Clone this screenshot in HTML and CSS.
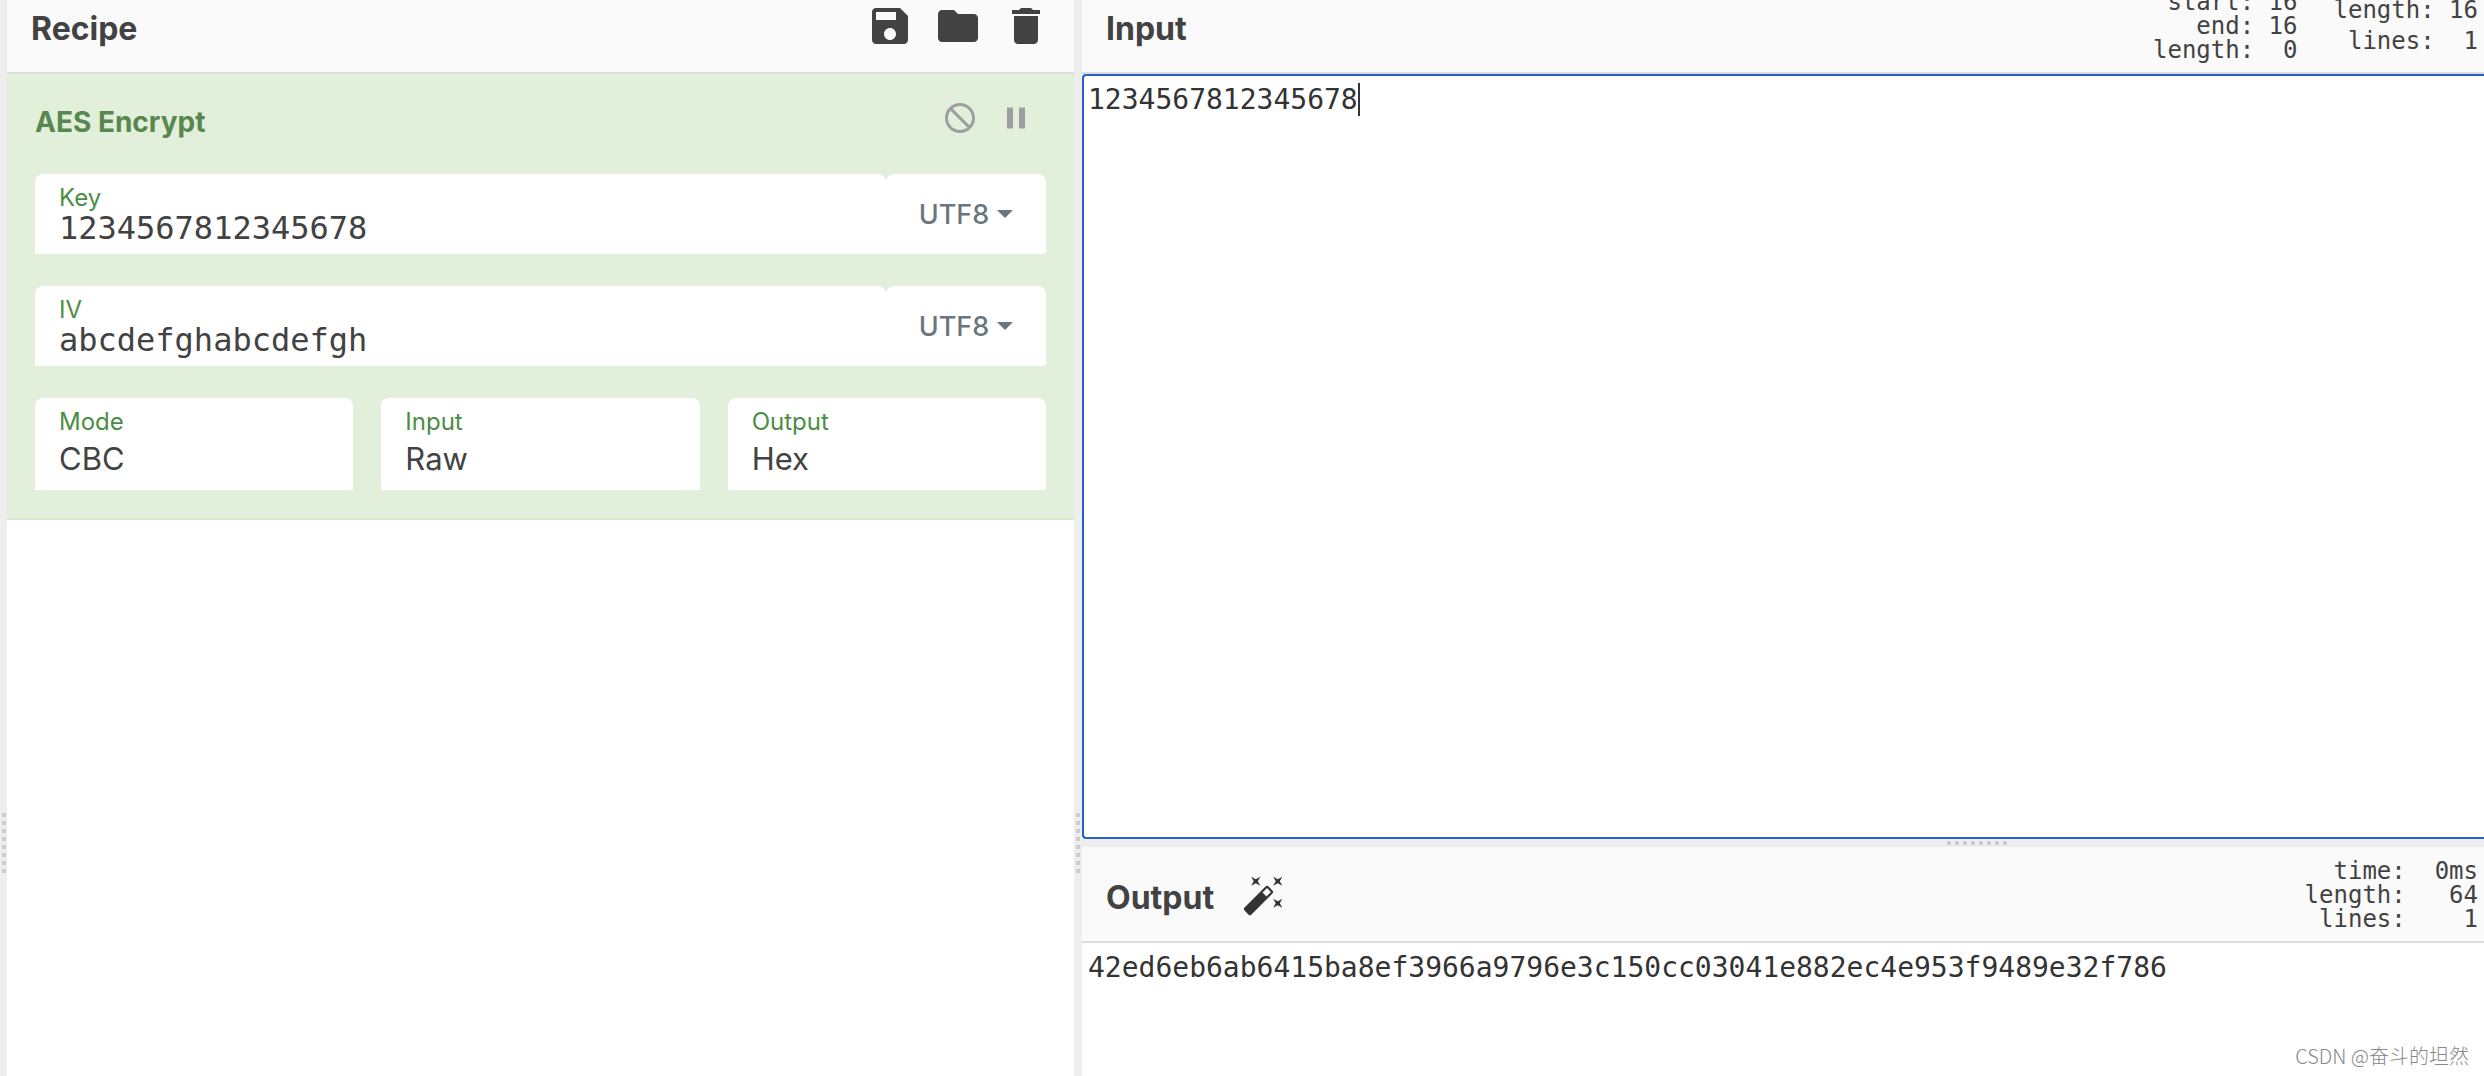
FILE: index.html
```html
<!DOCTYPE html>
<html lang="en">
<head>
<meta charset="utf-8">
<title>Recipe</title>
<link rel="stylesheet" href="styles.css">
</head>
<body>
<div id="workspace">
  <div class="gutter gutter-vertical"><span class="grip"></span></div>

  <!-- recipe -->
  <div id="recipe">
    <div class="title">
      <h2>Recipe</h2>
      <div class="controls">
        <button class="icon-button" aria-label="Save recipe">
          <svg viewBox="0 0 24 24"><path d="M17 3H5c-1.110 0-2 .9-2 2v14c0 1.100.89 2 2 2h14c1.100 0 2-.9 2-2V7l-4-4zm-5 16c-1.660 0-3-1.340-3-3s1.340-3 3-3 3 1.340 3 3-1.340 3-3 3zm3-10H5V5h10v4z"/></svg>
        </button>
        <button class="icon-button" aria-label="Load recipe">
          <svg viewBox="0 0 24 24"><path d="M10 4H4c-1.100 0-1.990.9-1.990 2L2 18c0 1.100.9 2 2 2h16c1.100 0 2-.9 2-2V8c0-1.100-.9-2-2-2h-8l-2-2z"/></svg>
        </button>
        <button class="icon-button" aria-label="Clear recipe">
          <svg viewBox="0 0 24 24"><path d="M6 19c0 1.100.9 2 2 2h8c1.100 0 2-.9 2-2V7H6v12zM19 4h-3.500l-1-1h-5l-1 1H5v2h14V4z"/></svg>
        </button>
      </div>
    </div>

    <div class="operation">
      <div class="op-head">
        <h3>AES Encrypt</h3>
        <div class="op-icons">
          <button class="op-icon" aria-label="Disable operation">
            <svg viewBox="0 0 24 24"><path d="M12 2C6.480 2 2 6.480 2 12s4.480 10 10 10 10-4.480 10-10S17.520 2 12 2zm0 18c-4.420 0-8-3.580-8-8 0-1.850.63-3.550 1.690-4.900L16.900 18.310C15.550 19.370 13.850 20 12 20zm6.310-3.100L7.100 5.690C8.450 4.630 10.150 4 12 4c4.420 0 8 3.580 8 8 0 1.850-.63 3.550-1.690 4.900z"/></svg>
          </button>
          <button class="op-icon" aria-label="Set breakpoint">
            <svg viewBox="0 0 24 24"><path d="M6 19h4V5H6v14zm8-14v14h4V5h-4z"/></svg>
          </button>
        </div>
      </div>
      <div class="arg-group">
        <div class="arg toggle-string">
          <label for="key">Key</label>
          <input id="key" type="text" value="1234567812345678">
        </div>
        <button class="toggle">UTF8<span class="arrow"></span></button>
      </div>
      <div class="arg-group">
        <div class="arg toggle-string">
          <label for="iv">IV</label>
          <input id="iv" type="text" value="abcdefghabcdefgh">
        </div>
        <button class="toggle">UTF8<span class="arrow"></span></button>
      </div>
      <div class="arg-row">
        <div class="arg">
          <label for="mode">Mode</label>
          <select id="mode"><option>CBC</option></select>
        </div>
        <div class="arg">
          <label for="in-format">Input</label>
          <select id="in-format"><option>Raw</option></select>
        </div>
        <div class="arg">
          <label for="out-format">Output</label>
          <select id="out-format"><option>Hex</option></select>
        </div>
      </div>
    </div>
  </div>

  <div class="gutter gutter-vertical"><span class="grip"></span></div>

  <!-- input and output -->
  <div id="io">
    <div class="title">
      <h2><label for="input-text">Input</label></h2>
      <div class="stats">
<pre>start: 16
  end: 16
length:  0</pre>
<pre class="loose">length: 16
 lines:  1</pre>
      </div>
    </div>
    <div class="input-wrap">
      <textarea id="input-text" spellcheck="false">1234567812345678</textarea>
      <span class="cursor"></span>
    </div>
    <div class="gutter gutter-horizontal"><span class="grip"></span></div>
    <div class="title">
      <h2><label for="output-text">Output</label></h2>
      <button class="magic" aria-label="Magic">
        <svg viewBox="0 0 24 24"><path d="M7.500 5.600L5 7l1.400-2.500L5 2l2.500 1.400L10 2 8.600 4.500 10 7 7.500 5.600M19.500 15.400L22 14l-1.400 2.500L22 19l-2.500-1.400L17 19l1.400-2.500L17 14l2.500 1.400M22 2l-1.400 2.500L22 7l-2.500-1.400L17 7l1.400-2.500L17 2l2.500 1.400L22 2M13.340 12.780l2.440-2.440-2.120-2.120-2.440 2.440 2.120 2.120M14.370 7.290l2.340 2.340c.39.37.39 1.020 0 1.410L5.040 22.710c-.39.39-1.040.39-1.410 0l-2.340-2.340c-.39-.37-.39-1.020 0-1.410L12.960 7.290c.39-.39 1.040-.39 1.410 0z"/></svg>
      </button>
      <div class="stats">
<pre>  time:  0ms
length:   64
 lines:    1</pre>
      </div>
    </div>
    <textarea id="output-text" readonly spellcheck="false">42ed6eb6ab6415ba8ef3966a9796e3c150cc03041e882ec4e953f9489e32f786</textarea>
  </div>
</div>
<div id="watermark">CSDN @奋斗的坦然</div>
</body>
</html>
```
FILE: styles.css
```css
* {
box-sizing: border-box;
}
body {
margin: 0;
height: 100vh;
overflow: hidden;
background: white;
color: #424242;
font-family: Inter, "Liberation Sans", sans-serif;
}
button {
border: none;
padding: 0;
background: transparent;
cursor: pointer;
}
svg {
display: block;
width: 100%;
height: 100%;
fill: currentColor;
}
/* the top of the headers is scrolled out of the window */
#workspace {
display: flex;
height: calc(100vh + 22px);
margin-top: -22px;
}
#recipe {
flex: 1067 1 0;
min-width: 0;
}
#io {
flex: 1402 1 0;
min-width: 0;
display: flex;
flex-direction: column;
}

/* split bars */
.gutter {
flex: none;
display: flex;
background: #eeeeee;
}
.gutter-vertical {
width: 8px;
align-items: flex-end;
justify-content: center;
padding-bottom: 203px;
}
.gutter-vertical:first-child {
width: 7px;
}
.gutter-horizontal {
height: 8px;
align-items: center;
justify-content: flex-end;
padding-right: 34%;
}
.grip {
width: 4px;
height: 60px;
background: repeating-linear-gradient(to bottom, #cccccc 0 4px, transparent 4px 8px);
}
.gutter-horizontal .grip {
width: 60px;
height: 4px;
background: repeating-linear-gradient(to right, #cccccc 0 4px, transparent 4px 8px);
}

.title {
flex: none;
display: flex;
align-items: center;
height: 96px;
padding: 2px 6px 0 24px;
background: #fafafa;
border-bottom: 2px solid #dddddd;
}
.title h2 {
margin: 6px 0 0 0;
font-size: 32px;
line-height: 40px;
font-weight: 700;
}
#recipe .title {
padding-right: 24px;
}
.controls {
display: flex;
gap: 20px;
margin-left: auto;
}
.icon-button {
width: 48px;
height: 48px;
color: #424242;
}
.magic {
width: 44px;
height: 44px;
margin-left: 28px;
color: #333333;
}
.stats {
display: flex;
align-items: center;
gap: 36px;
margin-left: auto;
}
pre {
margin: 0;
font-family: "DejaVu Sans Mono", monospace;
font-size: 24px;
line-height: 24px;
text-align: right;
}
.loose {
line-height: 31px;
}

/* operation */
.operation {
padding: 26px 28px 28px 28px;
background: #e2efda;
border-bottom: 2px solid #d8e8c6;
}
.op-head {
display: flex;
justify-content: space-between;
height: 36px;
margin-bottom: 38px;
padding-right: 12px;
}
.op-head h3 {
margin: 6px 0 0 0;
font-size: 28px;
line-height: 32px;
font-weight: 700;
color: #58884e;
}
.op-icons {
display: flex;
gap: 20px;
}
.op-icon {
width: 36px;
height: 36px;
color: #9e9e9e;
}
.arg-group {
display: flex;
height: 80px;
margin-bottom: 32px;
}
.arg {
flex: 1;
min-width: 0;
display: flex;
flex-direction: column;
padding: 12px 24px 0 24px;
background: white;
border-radius: 8px 8px 0 0;
}
.arg label {
font-size: 24px;
line-height: 24px;
color: #4c8d45;
}
.arg input, .arg select {
width: 100%;
height: 36px;
margin: 0;
padding: 0;
border: none;
outline: none;
background: transparent;
color: #424242;
font-size: 32px;
}
.arg input {
font-family: "DejaVu Sans Mono", monospace;
}
.arg select {
appearance: none;
margin-top: 4px;
height: 40px;
font-family: Inter, "Liberation Sans", sans-serif;
font-size: 31px;
}
.toggle {
display: flex;
align-items: center;
justify-content: center;
gap: 8px;
width: 160px;
background: white;
border-radius: 8px 8px 4px 0;
color: #6c757d;
font-family: Inter, "Liberation Sans", sans-serif;
font-size: 27px;
font-weight: 500;
}
.arrow {
border-top: 8px solid #6c757d;
border-left: 8px solid transparent;
border-right: 8px solid transparent;
}
.arg-row {
display: flex;
gap: 28px;
height: 92px;
}

/* input and output text */
textarea {
display: block;
width: 100%;
margin: 0;
border: none;
outline: none;
resize: none;
background: white;
color: #333333;
font-family: "DejaVu Sans Mono", monospace;
font-size: 28px;
line-height: 34px;
}
.input-wrap {
position: relative;
flex: 765 1 0;
}
#input-text {
height: 100%;
padding: 7px 4px;
border: 2px solid #2660c4;
border-right: none;
border-radius: 4px 0 0 4px;
}
.cursor {
position: absolute;
top: 9px;
left: calc(16ch + 6px);
width: 2px;
height: 33px;
background: #333333;
font-family: "DejaVu Sans Mono", monospace;
font-size: 28px;
}
#output-text {
flex: 117 1 0;
padding: 8px 6px;
}
#watermark {
position: absolute;
right: 15px;
bottom: 8px;
font-family: "Noto Sans CJK SC", sans-serif;
font-size: 20px;
line-height: 24px;
font-weight: 300;
color: #888888;
}
```
